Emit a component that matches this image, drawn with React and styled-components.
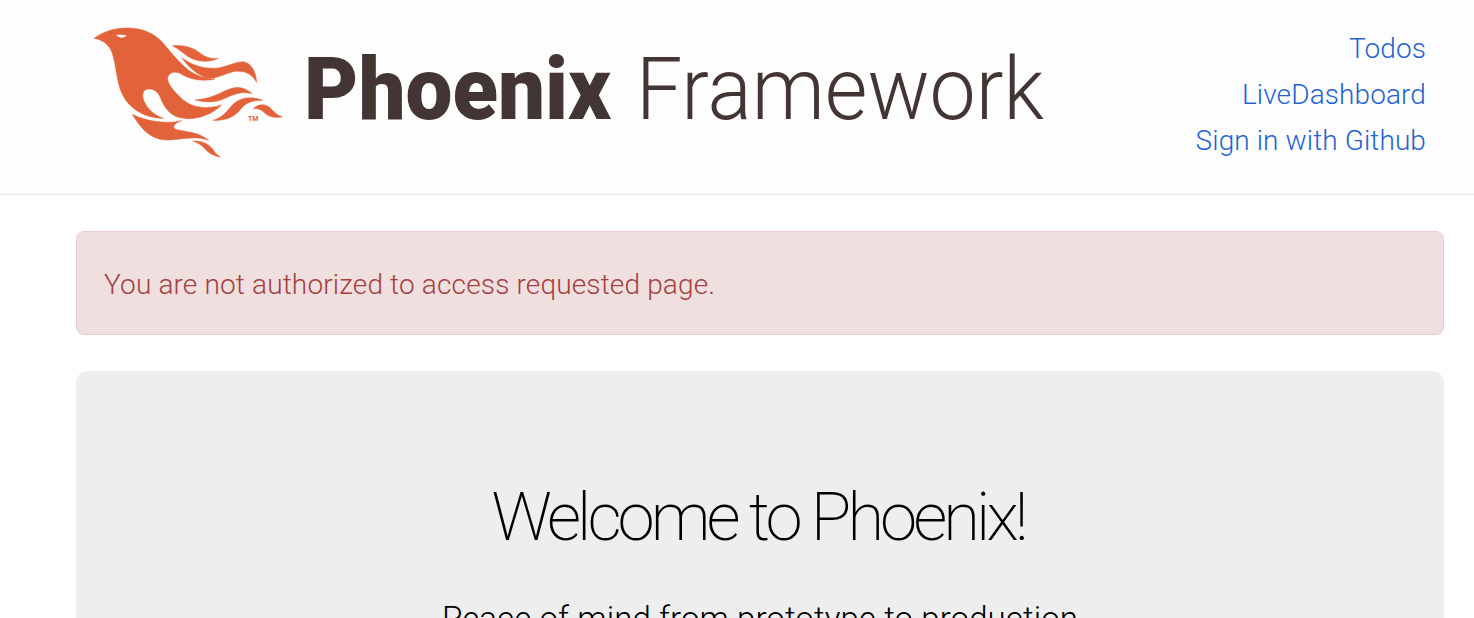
import React from "react";
import styled, { createGlobalStyle } from "styled-components";

const Global = createGlobalStyle`
  html, body { margin: 0; padding: 0; background: #fff; overflow: hidden; height: 618px; }
  body { font-family: "Roboto", "Liberation Sans", sans-serif; font-weight: 300; }
`;
const Header = styled.header`
  display: flex;
  justify-content: space-between;
  height: 194px;
  box-sizing: content-box;
  background: #fdfdfd;
  border-bottom: 1px solid #e9e9e9;
  padding: 0 48px 0 80px;
`;
const LogoLink = styled.a`
  display: block;
  width: 980px;
  height: 194px;
`;
const LogoSvg = styled.svg`
  display: block;
`;
const Nav = styled.nav`
  display: flex;
  flex-direction: column;
  align-items: flex-end;
  padding-top: 26px;
`;
const NavLink = styled.a`
  font-size: 28px;
  line-height: 46px;
  letter-spacing: 0.1px;
  color: #1f63d2;
  text-decoration: none;
`;
const Main = styled.main`
  padding: 36px 30px 0 76px;
`;
const Alert = styled.p`
  margin: 0 0 36px;
  height: 104px;
  box-sizing: border-box;
  display: flex;
  align-items: center;
  padding: 2px 27px 0;
  font-size: 28px;
  letter-spacing: 0.15px;
  color: #a5403e;
  background: #efdfdf;
  border: 1px solid #e8cdd0;
  border-radius: 8px;
`;
const Hero = styled.section`
  background: #eee;
  border-radius: 12px;
  padding: 106px 0 60px;
  text-align: center;
  color: #000;
`;
const Title = styled.h1`
  margin: 0 0 40px;
  padding-right: 4px;
  font-size: 67px;
  line-height: 80px;
  font-weight: 200;
  letter-spacing: -4px;
`;
const Sub = styled.p`
  margin: 0;
  font-size: 33px;
  line-height: 44px;
  letter-spacing: 0.1px;
`;

const Flame = () => (
  <g transform="translate(0,15) scale(0.3333)" fill="#e2633a" stroke="#e2633a" strokeWidth="1.5" strokeLinejoin="round">
    <path d="M42 70 C62 55 95 40 135 39 C185 37 225 55 250 85 C275 115 295 140 325 165 C350 183 380 192 405 192 C370 200 330 195 300 175 C285 168 265 172 263 190 C263 210 285 232 310 255 C340 280 385 283 425 270 C395 300 350 315 310 310 C275 305 255 285 240 245 C232 225 210 217 195 225 C183 235 188 258 205 280 C218 295 235 305 250 310 C200 310 150 285 128 240 C108 200 110 150 95 110 C88 92 70 75 42 70 Z" />
    <path fill="#fdfdfd" stroke="none" d="M108 60 C118 58 132 59 140 61 C135 69 120 72 108 60 Z" />
    <path d="M278 92 C315 88 345 100 365 118 C378 128 395 132 415 130 C385 145 350 140 325 125 C308 112 295 102 278 92 Z" />
    <path d="M305 128 C335 150 375 165 420 158 C450 150 470 140 490 140 C515 145 528 170 530 202 C515 175 490 165 460 170 C430 178 405 192 385 190 C350 180 325 155 305 128 Z" />
    <path d="M345 255 C395 252 425 230 455 220 C480 212 500 222 517 236 C485 228 460 238 435 250 C405 265 375 262 345 255 Z" />
    <path d="M398 316 C425 310 440 290 455 272 C475 250 510 240 548 256 C515 255 495 265 480 285 C460 310 430 318 398 316 Z" />
    <path d="M520 281 C535 265 560 265 575 283 C585 295 595 302 607 306 C580 310 565 305 552 292 C542 283 532 280 520 281 Z" />
    <path d="M157 298 C190 315 250 330 305 317 C290 322 278 330 282 340 C300 352 350 345 386 376 C350 362 310 372 270 375 C215 378 185 345 157 298 Z" />
    <path d="M338 378 C370 376 390 390 400 405 C406 415 412 420 421 426 C395 422 382 410 372 398 C362 388 350 382 338 378 Z" />
  </g>
);

const LogoText = styled.text`
  font-family: "Roboto", "Liberation Sans", sans-serif;
  fill: ${(p) => p.$color || "#433533"};
`;

const Logo = () => (
  <LogoSvg width="980" height="194" viewBox="0 0 980 194">
    <Flame />
    <LogoText $color="#e2633a" x="168" y="121" fontSize="7" fontWeight="700">TM</LogoText>
    <LogoText x="224" y="119" fontSize="87" fontWeight="900" textLength="307" lengthAdjust="spacingAndGlyphs">Phoenix</LogoText>
    <LogoText x="556" y="119" fontSize="87" fontWeight="300" textLength="408" lengthAdjust="spacingAndGlyphs">Framework</LogoText>
  </LogoSvg>
);

export default function App() {
  return (
    <>
      <Global />
      <Header>
        <LogoLink href="#"><Logo /></LogoLink>
        <Nav>
          <NavLink href="#">Todos</NavLink>
          <NavLink href="#">LiveDashboard</NavLink>
          <NavLink href="#">Sign in with Github</NavLink>
        </Nav>
      </Header>
      <Main>
        <Alert>You are not authorized to access requested page.</Alert>
        <Hero>
          <Title>Welcome to Phoenix!</Title>
          <Sub>Peace of mind from prototype to production</Sub>
        </Hero>
      </Main>
    </>
  );
}
